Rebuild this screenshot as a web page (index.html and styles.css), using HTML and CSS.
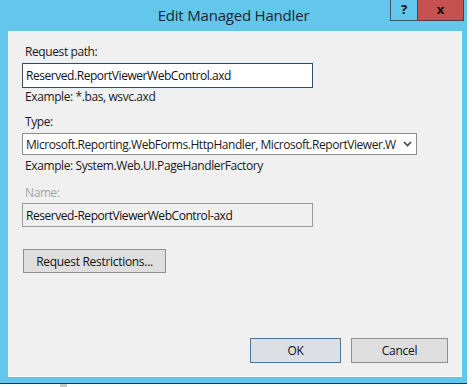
FILE: index.html
```html
<!DOCTYPE html>
<html lang="en">
<head>
    <meta charset="UTF-8">
    <title>Edit Managed Handler</title>
    <link rel="stylesheet" href="styles.css">
</head>
<body>
    <div class="window">
        <div class="title-bar">
            <span class="title">Edit Managed Handler</span>
            <div class="caption-buttons">
                <div class="cap-btn help">?</div>
                <div class="cap-btn close">x</div>
            </div>
        </div>

        <div class="client">
            <label class="label" for="path">Request path:</label>
            <input class="textbox focused" id="path" type="text" value="Reserved.ReportViewerWebControl.axd">
            <div class="hint">Example: *.bas, wsvc.axd</div>

            <label class="label gap">Type:</label>
            <div class="combo">
                <span class="combo-text">Microsoft.Reporting.WebForms.HttpHandler, Microsoft.ReportViewer.W</span>
                <svg class="chevron" width="9" height="6" viewBox="0 0 9 6">
                    <path d="M1 1 L4.5 4.5 L8 1" fill="none" stroke="#444" stroke-width="1.6"/>
                </svg>
            </div>
            <div class="hint tight">Example: System.Web.UI.PageHandlerFactory</div>

            <label class="label disabled gap-lg" for="name">Name:</label>
            <input class="textbox readonly" id="name" type="text" value="Reserved-ReportViewerWebControl-axd" readonly>

            <button class="btn restrictions">Request Restrictions...</button>

            <div class="dialog-buttons">
                <button class="btn ok">OK</button>
                <button class="btn cancel">Cancel</button>
            </div>
        </div>
    </div>
    <div class="below">
        <div class="taskbar-bit"></div>
    </div>
</body>
</html>
```

FILE: styles.css
```css
body {
    margin: 0;
    padding: 0;
    background: #ffffff;
    font-family: 'Open Sans', 'Noto Sans', sans-serif;
    font-size: 12px;
    color: #1a1a1a;
    overflow: hidden;
}

.window {
    width: 467px;
    height: 383px;
    background: #62c7ea;
    border-bottom: 1px solid #27343c;
    display: flex;
    flex-direction: column;
}

.title-bar {
    height: 31px;
    position: relative;
    display: flex;
    justify-content: center;
}

.title {
    font-size: 15px;
    line-height: 30px;
    color: #1b2833;
    letter-spacing: -0.2px;
}

.caption-buttons {
    position: absolute;
    top: 0;
    right: 3px;
    display: flex;
}

.cap-btn {
    height: 20px;
    line-height: 19px;
    text-align: center;
    font-weight: bold;
    font-size: 13px;
    color: #111;
    border: 1px solid #3c5866;
    border-top: none;
}

.cap-btn.help {
    width: 26px;
    border-right: none;
}

.cap-btn.close {
    width: 45px;
    background: #c75050;
    border-color: #5a3a3a;
}

.client {
    flex: 1;
    margin: 0 5px 6px 8px;
    background: #f0f0f0;
    border-right: 1px solid #fafafa;
    border-bottom: 1px solid #fafafa;
    padding: 13px 13px 13px 14px;
    display: flex;
    flex-direction: column;
    align-items: flex-start;
}

.label {
    display: block;
    line-height: 16px;
    padding-left: 3px;
    letter-spacing: -0.4px;
}

.label.gap {
    margin-top: 9px;
}

.label.gap-lg {
    margin-top: 11px;
}

.label.disabled {
    color: #a3a3a3;
}

.hint {
    line-height: 16px;
    margin-top: 1px;
    padding-left: 3px;
    letter-spacing: -0.4px;
}

.hint.tight {
    margin-top: 3px;
}

.textbox {
    box-sizing: border-box;
    width: 291px;
    margin: 3px 0 0 0;
    padding: 0 3px;
    font-family: inherit;
    font-size: 12px;
    letter-spacing: -0.45px;
    color: #111;
    outline: none;
}

.textbox.focused {
    height: 25px;
    background: #ffffff;
    border: 1px solid #3a4c5e;
    box-shadow: 1px 0 0 1px #e3f1fa;
}

.textbox.readonly {
    height: 24px;
    margin-top: 2px;
    background: #f0f0f0;
    border: 1px solid #9a9a9a;
}

.combo {
    box-sizing: border-box;
    width: 395px;
    height: 22px;
    margin-top: 3px;
    background: #ffffff;
    border: 1px solid #8c8c8c;
    display: flex;
    align-items: center;
    justify-content: space-between;
    padding: 0 4px 0 3px;
}

.combo-text {
    white-space: nowrap;
    letter-spacing: -0.45px;
}

.btn {
    box-sizing: border-box;
    font-family: inherit;
    font-size: 12px;
    letter-spacing: -0.3px;
    color: #111;
    background: #dedede;
    border: 1px solid #8e8e8e;
    padding: 0;
}

.restrictions {
    width: 143px;
    height: 24px;
    margin: 22px 0 0 1px;
}

.dialog-buttons {
    margin-top: auto;
    align-self: flex-end;
    display: flex;
    gap: 10px;
}

.ok {
    width: 91px;
    height: 25px;
    background: #dce0e5;
    border-color: #4f7595;
}

.cancel {
    width: 97px;
    height: 25px;
}

.below {
    height: 3px;
    position: relative;
}

.taskbar-bit {
    position: absolute;
    left: 60px;
    top: 0;
    width: 7px;
    height: 3px;
    background: #c9c9c9;
}
```
